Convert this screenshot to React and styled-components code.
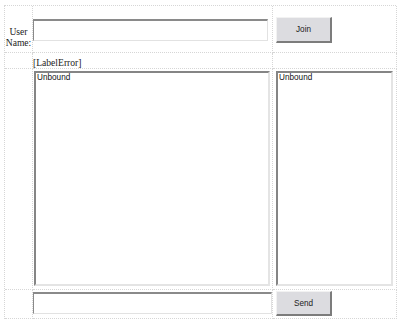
import React from 'react';
import styled, { createGlobalStyle } from 'styled-components';

const GlobalStyle = createGlobalStyle`
  body {
    margin: 0;
    background: #fff;
  }
`;

const DesignTable = styled.div`
  display: grid;
  grid-template-columns: 28px 240px 124px;
  grid-template-rows: 47px 16px 221px 29px;
  width: 392px;
  margin: 5px 0 0 4px;
  border-top: 1px dotted #d6d6d6;
  border-left: 1px dotted #d6d6d6;
  box-sizing: border-box;
`;

const Cell = styled.div`
  box-sizing: border-box;
  border-right: 1px dotted #d6d6d6;
  border-bottom: 1px dotted #d6d6d6;
  display: flex;
  align-items: flex-start;
  justify-content: ${({ $align }) => $align || 'flex-start'};
  padding: ${({ $pad }) => $pad || '0'};
  min-width: 0;
`;

const Label = styled.span`
  font-family: 'Liberation Serif', 'Times New Roman', serif;
  font-size: 9.6px;
  line-height: 11px;
  color: #222;
  text-align: ${({ $center }) => ($center ? 'center' : 'left')};
  white-space: nowrap;
`;

const TextBox = styled.div`
  box-sizing: border-box;
  width: ${({ $w }) => $w}px;
  height: ${({ $h }) => $h}px;
  background: #fff;
  border-style: solid;
  border-width: 2px 1px 1px 1px;
  border-color: #8a8a8a #e2e2e2 #e2e2e2 #8a8a8a;
`;

const ListBox = styled.div`
  box-sizing: border-box;
  width: ${({ $w }) => $w}px;
  height: ${({ $h }) => $h}px;
  background: #fff;
  border-style: solid;
  border-width: 2px;
  border-color: #858585 #e4e4e4 #e4e4e4 #858585;
  font-family: 'Liberation Sans', Arial, sans-serif;
  font-size: 8.2px;
  line-height: 10px;
  color: #111;
  padding: 0 1px;
`;

const Button = styled.div`
  box-sizing: border-box;
  width: ${({ $w }) => $w}px;
  height: ${({ $h }) => $h}px;
  background: #dcdce0;
  border-style: solid;
  border-width: 1px 2px 2px 1px;
  border-color: #f2f2f2 #7c7c7c #7c7c7c #f2f2f2;
  display: flex;
  align-items: center;
  justify-content: center;
  font-family: 'Liberation Sans', Arial, sans-serif;
  font-size: 8.2px;
  color: #222;
`;

export default function App() {
  return (
    <>
      <GlobalStyle />
      <DesignTable>
        <Cell $align="center" $pad="20px 0 0 0">
          <Label $center>
            User
            <br />
            Name:
          </Label>
        </Cell>
        <Cell $pad="13px 0 0 0">
          <TextBox $w={235} $h={22} />
        </Cell>
        <Cell $pad="11px 0 0 3px">
          <Button $w={56} $h={26}>Join</Button>
        </Cell>

        <Cell />
        <Cell $pad="4px 0 0 0">
          <Label>[LabelError]</Label>
        </Cell>
        <Cell />

        <Cell />
        <Cell $pad="2px 0 0 1px">
          <ListBox $w={236} $h={215}>Unbound</ListBox>
        </Cell>
        <Cell $pad="2px 0 0 3px">
          <ListBox $w={117} $h={215}>Unbound</ListBox>
        </Cell>

        <Cell />
        <Cell $pad="2px 0 0 0">
          <TextBox $w={239} $h={22} />
        </Cell>
        <Cell $pad="1px 0 0 3px">
          <Button $w={56} $h={25}>Send</Button>
        </Cell>
      </DesignTable>
    </>
  );
}
